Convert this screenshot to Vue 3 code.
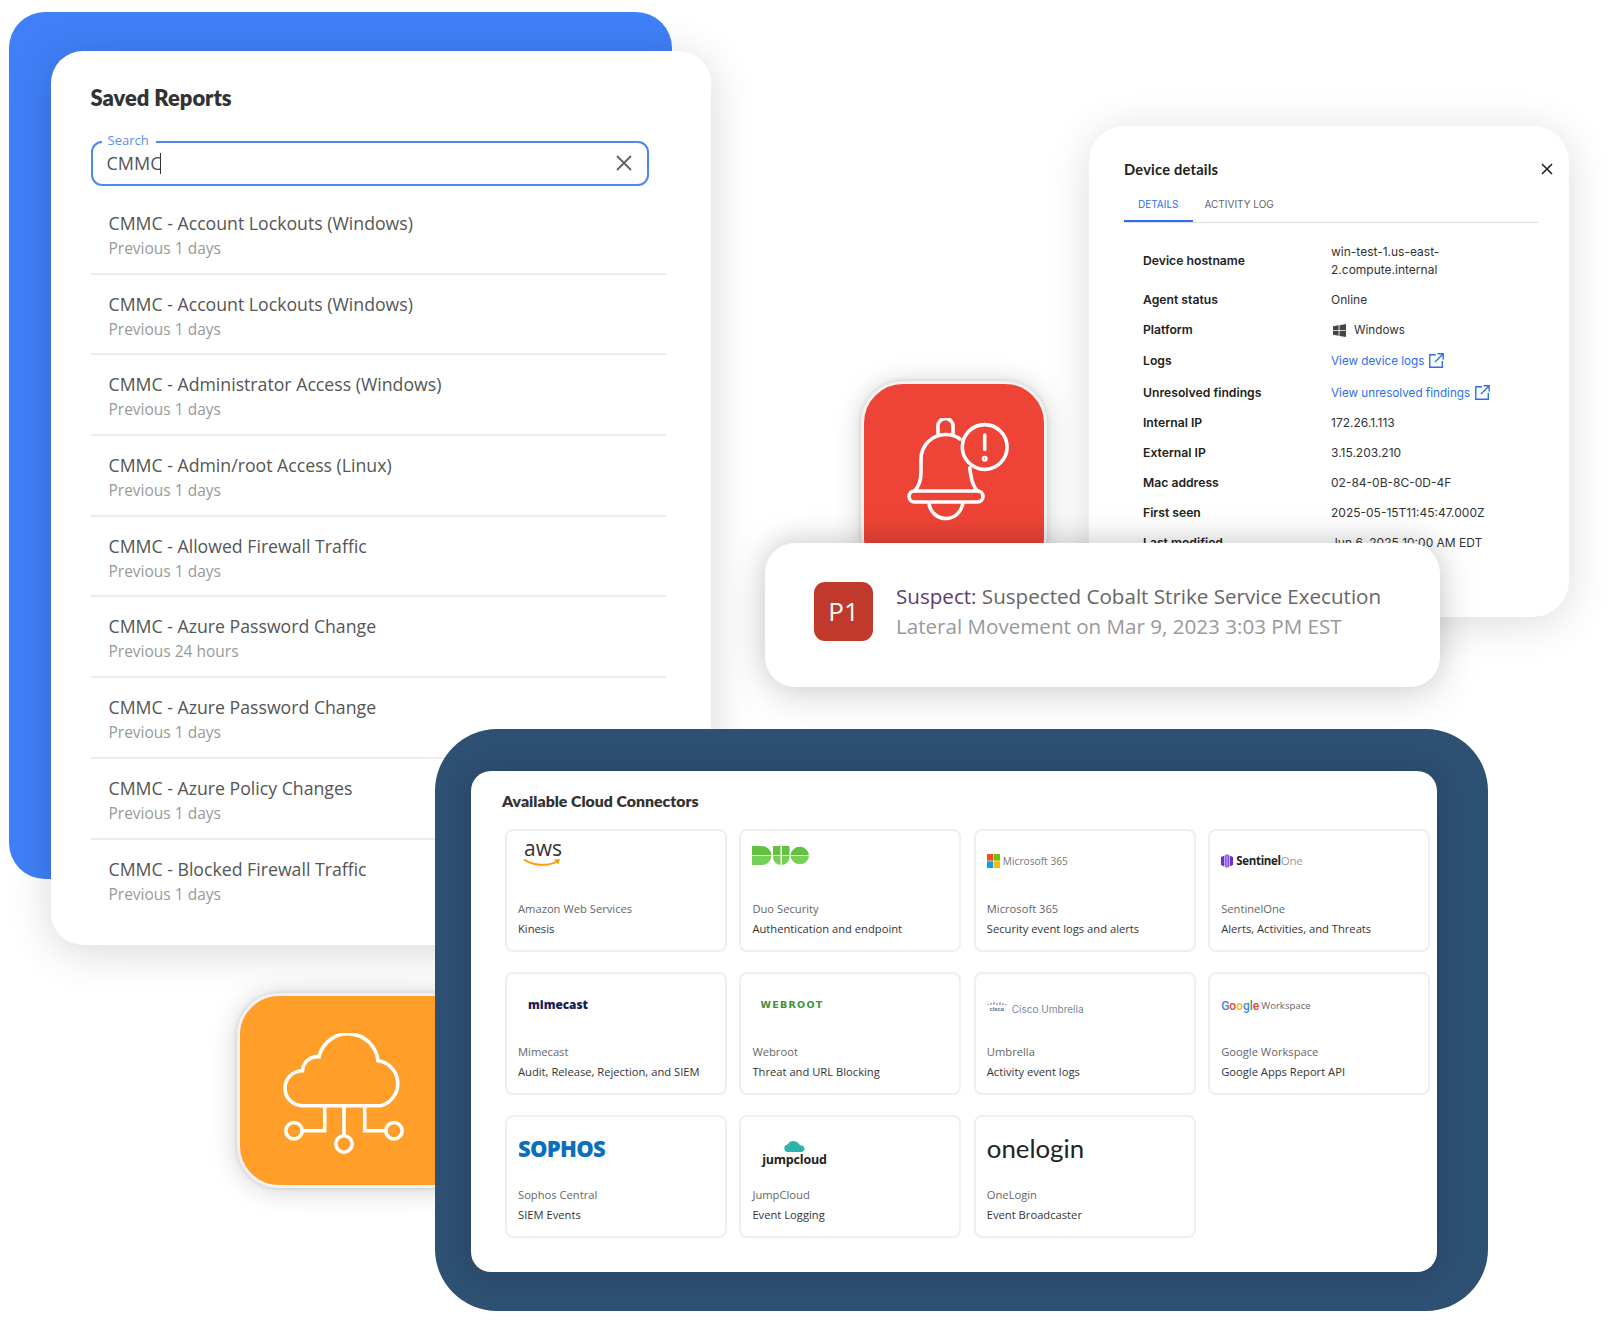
<template>
  <div class="canvas">
    <div class="blue-panel"></div>

    <section class="saved">
      <h2 class="saved-title">Saved Reports</h2>
      <div class="search">
        <span class="search-label">Search</span>
        <span class="search-value">CMMC<i class="caret"></i></span>
        <svg class="search-clear" viewBox="0 0 16 16" width="16" height="16">
          <path d="M1 1l14 14M15 1L1 15" fill="none" stroke="#5f6368" stroke-width="1.8" />
        </svg>
      </div>
      <div class="report" v-for="(r, i) in reports" :key="i">
        <div class="report-name">{{ r.name }}</div>
        <div class="report-range">{{ r.range }}</div>
      </div>
    </section>

    <div class="tile tile-orange">
      <svg viewBox="0 0 122 122" width="122" height="122" fill="none" stroke="#fff" stroke-width="3.6">
        <path d="M19.5 72.7A17.5 17.5 0 0 1 19.5 37.7A15 15 0 0 1 36 23.7A30 30 0 0 1 95 27.7A23 23 0 0 1 97.7 72.7Z" />
        <path d="M41.7 72.7V97.7H19.5M61 72.7V103M81.7 72.7V97.7H103" />
        <circle cx="11" cy="97.7" r="8.2" />
        <circle cx="61" cy="111" r="8.2" />
        <circle cx="111" cy="97.7" r="8.2" />
      </svg>
    </div>

    <section class="device">
      <div class="device-head">
        <h3 class="device-title">Device details</h3>
        <svg viewBox="0 0 12 12" width="12" height="12">
          <path d="M1 1l10 10M11 1L1 11" fill="none" stroke="#222" stroke-width="1.6" />
        </svg>
      </div>
      <div class="tabs">
        <span class="tab active">DETAILS</span>
        <span class="tab">ACTIVITY LOG</span>
      </div>
      <div class="rows">
        <div class="row row-tall">
          <span class="row-label">Device hostname</span>
          <span class="row-value">win-test-1.us-east-<br />2.compute.internal</span>
        </div>
        <div class="row">
          <span class="row-label">Agent status</span>
          <span class="row-value">Online</span>
        </div>
        <div class="row">
          <span class="row-label">Platform</span>
          <span class="row-value platform">
            <svg viewBox="0 0 12 12" width="13" height="13">
              <path d="M0 2l5.2-.8v4.5H0zM6 1.1L12 0v5.7H6zM0 6.4h5.2v4.4L0 10zM6 6.4h6V12l-6-.9z" fill="#444" />
            </svg>
            Windows
          </span>
        </div>
        <div class="row row-link" v-for="l in links" :key="l.label">
          <span class="row-label">{{ l.label }}</span>
          <span class="row-value link">
            {{ l.text }}
            <svg viewBox="0 0 15 15" width="15" height="15" fill="none" stroke="#2b6ff0" stroke-width="1.4">
              <path d="M7 1.7H.8v12.5h12.5V8M8.5.8h5.7v5.7M14 1L6 9" />
            </svg>
          </span>
        </div>
        <div class="row" v-for="d in deviceRows" :key="d.label">
          <span class="row-label">{{ d.label }}</span>
          <span class="row-value">{{ d.value }}</span>
        </div>
      </div>
    </section>

    <div class="tile tile-red">
      <svg viewBox="0 0 104 104" width="104" height="104" fill="none" stroke="#fff" stroke-width="3.6" stroke-linecap="round">
        <path d="M31 17.5V8A7.5 7.5 0 0 1 46 8V17.5" />
        <path d="M8 72.5C12 68 14 62 14 54V41A24.5 24.5 0 0 1 38.5 16.5C44 16.5 49 18 53 21" />
        <path d="M62.7 50L64 58C65 64 67 69 70 72.5" />
        <rect x="2" y="73" width="74" height="11" rx="5.5" />
        <path d="M22 85C23 95 31 100.5 39 100.5C47 100.5 54 95 56 85" />
        <circle cx="77.7" cy="29" r="22.4" />
        <path d="M77.7 17V31.5" />
        <circle cx="77.7" cy="40.7" r="1.2" />
      </svg>
    </div>

    <section class="alert">
      <div class="priority">P1</div>
      <div class="alert-text">
        <div class="alert-line"><span class="suspect">Suspect:</span> Suspected Cobalt Strike Service Execution</div>
        <div class="alert-sub">Lateral Movement on Mar 9, 2023 3:03 PM EST</div>
      </div>
    </section>

    <section class="navy">
      <div class="connectors">
        <h3 class="connectors-title">Available Cloud Connectors</h3>
        <div class="connector-grid">
          <div class="connector" v-for="c in connectors" :key="c.id">
            <div class="logo" :class="'logo-' + c.id">
              <template v-if="c.id === 'aws'">
                <span class="aws-text">aws</span>
                <svg class="aws-smile" viewBox="0 0 38 9" width="38" height="9">
                  <path d="M1 1.5C10 8 25 8.5 34 3.5" fill="none" stroke="#f90" stroke-width="2" />
                  <path d="M31 1.5L37 1L35 6.5Z" fill="#f90" />
                </svg>
              </template>

              <svg v-else-if="c.id === 'duo'" viewBox="0 0 57 19" width="57" height="19">
                <path d="M0 0H10A9.5 9.5 0 0 1 19.5 9.2H0Z" fill="#63c13f" />
                <path d="M0 10H19.5A9.5 9.5 0 0 1 10 19H0Z" fill="#78cf57" />
                <path d="M21 0H28.5V9.2H21ZM30 0H37.5V9.2H30Z" fill="#63c13f" />
                <path d="M21 10H28.5V19A8 8 0 0 1 21 11ZM30 10H37.5V11A8 8 0 0 1 30 19Z" fill="#78cf57" />
                <path d="M38.5 9.2A9.3 9.3 0 0 1 57 9.2Z" fill="#63c13f" />
                <path d="M38.5 10H57A9.3 9.3 0 0 1 38.5 10Z" fill="#78cf57" />
              </svg>

              <template v-else-if="c.id === 'ms'">
                <svg viewBox="0 0 13 14" width="13" height="14">
                  <rect width="6.2" height="6.7" fill="#f25022" />
                  <rect x="6.8" width="6.2" height="6.7" fill="#7fba00" />
                  <rect y="7.3" width="6.2" height="6.7" fill="#00a4ef" />
                  <rect x="6.8" y="7.3" width="6.2" height="6.7" fill="#ffb900" />
                </svg>
                <span>Microsoft 365</span>
              </template>

              <template v-else-if="c.id === 's1'">
                <svg viewBox="0 0 12 14" width="12" height="14" fill="#6b2fd6">
                  <path d="M0 3L3.4 1.5V12.5L0 11ZM4.2 1.2L5.6 0V14L4.2 12.8ZM6.4 0L7.8 1.2V12.8L6.4 14ZM8.6 1.5L12 3V11L8.6 12.5Z" />
                </svg>
                <span class="s1-text"><b>Sentinel</b>One</span>
              </template>

              <span v-else-if="c.id === 'mimecast'">mimecast</span>
              <span v-else-if="c.id === 'webroot'">WEBROOT</span>

              <template v-else-if="c.id === 'cisco'">
                <span class="cisco-mark">
                  <svg viewBox="0 0 20 4" width="20" height="4" stroke="#5b6f8c" stroke-width="1">
                    <path d="M1 3V2M4 3V1M7 3V0M10 3V1M13 3V0M16 3V1M19 3V2" />
                  </svg>
                  <span class="cisco-word">cisco</span>
                </span>
                <span>Cisco Umbrella</span>
              </template>

              <template v-else-if="c.id === 'google'">
                <span class="google-word"><i class="g-b">G</i><i class="g-r">o</i><i class="g-y">o</i><i class="g-b">g</i><i class="g-g">l</i><i class="g-r">e</i></span>
                <span>Workspace</span>
              </template>

              <span v-else-if="c.id === 'sophos'">SOPHOS</span>

              <template v-else-if="c.id === 'jumpcloud'">
                <svg viewBox="0 0 23 11" width="23" height="11">
                  <path d="M4 11A3.8 3.8 0 0 1 4.5 3.6A7 7 0 0 1 17 4.4A3.4 3.4 0 0 1 19 11Z" fill="#2eb2ab" />
                </svg>
                <span>jumpcloud</span>
              </template>

              <span v-else-if="c.id === 'onelogin'">onelogin</span>
            </div>
            <div class="connector-name">{{ c.name }}</div>
            <div class="connector-desc">{{ c.desc }}</div>
          </div>
        </div>
      </div>
    </section>
  </div>
</template>

<script setup>
const reports = [
  { name: 'CMMC - Account Lockouts (Windows)', range: 'Previous 1 days' },
  { name: 'CMMC - Account Lockouts (Windows)', range: 'Previous 1 days' },
  { name: 'CMMC - Administrator Access (Windows)', range: 'Previous 1 days' },
  { name: 'CMMC - Admin/root Access (Linux)', range: 'Previous 1 days' },
  { name: 'CMMC - Allowed Firewall Traffic', range: 'Previous 1 days' },
  { name: 'CMMC - Azure Password Change', range: 'Previous 24 hours' },
  { name: 'CMMC - Azure Password Change', range: 'Previous 1 days' },
  { name: 'CMMC - Azure Policy Changes', range: 'Previous 1 days' },
  { name: 'CMMC - Blocked Firewall Traffic', range: 'Previous 1 days' },
]

const links = [
  { label: 'Logs', text: 'View device logs' },
  { label: 'Unresolved findings', text: 'View unresolved findings' },
]

const deviceRows = [
  { label: 'Internal IP', value: '172.26.1.113' },
  { label: 'External IP', value: '3.15.203.210' },
  { label: 'Mac address', value: '02-84-0B-8C-0D-4F' },
  { label: 'First seen', value: '2025-05-15T11:45:47.000Z' },
  { label: 'Last modified', value: 'Jun 6, 2025 10:00 AM EDT' },
]

const connectors = [
  { id: 'aws', name: 'Amazon Web Services', desc: 'Kinesis' },
  { id: 'duo', name: 'Duo Security', desc: 'Authentication and endpoint' },
  { id: 'ms', name: 'Microsoft 365', desc: 'Security event logs and alerts' },
  { id: 's1', name: 'SentinelOne', desc: 'Alerts, Activities, and Threats' },
  { id: 'mimecast', name: 'Mimecast', desc: 'Audit, Release, Rejection, and SIEM' },
  { id: 'webroot', name: 'Webroot', desc: 'Threat and URL Blocking' },
  { id: 'cisco', name: 'Umbrella', desc: 'Activity event logs' },
  { id: 'google', name: 'Google Workspace', desc: 'Google Apps Report API' },
  { id: 'sophos', name: 'Sophos Central', desc: 'SIEM Events' },
  { id: 'jumpcloud', name: 'JumpCloud', desc: 'Event Logging' },
  { id: 'onelogin', name: 'OneLogin', desc: 'Event Broadcaster' },
]
</script>

<style scoped>
.canvas {
  position: relative;
  width: 1620px;
  height: 1323px;
  overflow: hidden;
  background: #fff;
  font-family: "Open Sans", sans-serif;
}

/* the windows sit on a free canvas, overlapping each other */
.blue-panel {
  position: absolute;
  left: 9px;
  top: 12px;
  width: 663px;
  height: 867px;
  border-radius: 36px;
  background: #3f7ff8;
}

.saved {
  position: absolute;
  left: 51px;
  top: 51px;
  box-sizing: border-box;
  width: 660px;
  height: 894px;
  padding: 35px 45px 0 39.5px;
  border-radius: 32px;
  background: #fff;
  box-shadow: 0 6px 44px rgba(0, 0, 0, 0.16);
}

.saved-title {
  margin: 0;
  font: 800 21.9px/24px Lato, sans-serif;
  color: #333;
}

.search {
  position: relative;
  box-sizing: border-box;
  display: flex;
  align-items: center;
  justify-content: space-between;
  width: 558px;
  height: 45px;
  margin: 31px 0 8px;
  padding: 0 15px 2px 14px;
  border: 2px solid #4a88f5;
  border-radius: 11px;
}

.search-label {
  position: absolute;
  left: 9px;
  top: -12px;
  padding: 0 7px 0 6px;
  background: #fff;
  font-size: 13px;
  line-height: 18px;
  color: #5a90f3;
}

.search-value {
  font-size: 18px;
  color: #555;
}

.caret {
  display: inline-block;
  width: 1.5px;
  height: 21px;
  margin-left: -2px;
  vertical-align: -4px;
  background: #333;
}

.report {
  box-sizing: border-box;
  width: 575px;
  height: 80.7px;
  padding: 16px 0 0 18px;
  border-bottom: 2px solid #ececec;
}

.report:last-child {
  border-bottom: 0;
}

.report-name {
  font-size: 17.7px;
  line-height: 26px;
  color: #555;
}

.report-range {
  font-size: 15.5px;
  line-height: 24px;
  color: #999;
}

.tile {
  position: absolute;
  box-sizing: border-box;
  border: 3px solid #f2f2f4;
  border-radius: 42px;
  box-shadow: 0 0 5px rgba(0, 0, 0, 0.14), 0 2px 28px rgba(0, 0, 0, 0.18);
}

.tile-orange {
  left: 237px;
  top: 993px;
  width: 240px;
  height: 195px;
  padding: 37px 0 0 43px;
  background: #ff9f2a;
}

.tile-red {
  left: 861px;
  top: 381px;
  width: 186px;
  height: 200px;
  padding: 34px 0 0 43px;
  background: #ee4437;
}

.device {
  position: absolute;
  left: 1089px;
  top: 126px;
  box-sizing: border-box;
  width: 480px;
  height: 491px;
  padding: 33px 31px 0 35px;
  overflow: hidden;
  border-radius: 36px;
  background: #fff;
  box-shadow: 0 6px 44px rgba(0, 0, 0, 0.14);
  font-family: Inter, sans-serif;
}

.device-head {
  display: flex;
  align-items: center;
  justify-content: space-between;
  height: 20px;
  margin-right: -15px;
}

.device-title {
  margin: 0;
  font: 700 14.7px/20px Lato, sans-serif;
  letter-spacing: 0.2px;
  color: #222;
}

.tabs {
  display: flex;
  height: 32px;
  margin-top: 11px;
  border-bottom: 1px solid #ddd;
}

.tab {
  box-sizing: border-box;
  height: 32px;
  padding: 6px 12px 0;
  font-size: 10px;
  line-height: 17px;
  color: #666;
}

.tab.active {
  padding: 6px 14px 0;
  border-bottom: 2px solid #2b6ff0;
  color: #2b6ff0;
}

.rows {
  padding: 14px 0 0 19px;
}

.row {
  display: grid;
  grid-template-columns: 188px 1fr;
  align-items: center;
  height: 30px;
  font-size: 12px;
  line-height: 18px;
  color: #333;
}

.row-tall {
  height: 48px;
}

.row-tall .row-value {
  margin-top: -1px;
}

.row-link {
  height: 31px;
  font-size: 11.7px;
}

.row-link + .row-link {
  margin-top: 1px;
}

.row-label {
  font-size: 12.2px;
  font-weight: 600;
  color: #222;
}

.platform {
  display: flex;
  align-items: center;
  gap: 8px;
  padding-left: 2px;
  font-size: 11.7px;
}

.link {
  display: flex;
  align-items: center;
  gap: 5px;
  color: #2b6ff0;
}

.alert {
  position: absolute;
  left: 765px;
  top: 543px;
  box-sizing: border-box;
  display: flex;
  align-items: flex-start;
  gap: 23px;
  width: 675px;
  height: 144px;
  padding: 39px 0 0 49px;
  border-radius: 30px;
  background: #fff;
  box-shadow: 0 6px 42px rgba(0, 0, 0, 0.18), 0 -6px 24px rgba(0, 0, 0, 0.08);
}

.priority {
  flex: none;
  width: 59px;
  height: 59px;
  border-radius: 11px;
  background: #c0392b;
  font-size: 26px;
  line-height: 59px;
  text-align: center;
  color: #fff;
}

.alert-text {
  margin-top: -1px;
  font-size: 20.6px;
  line-height: 30px;
  color: #666;
}

.suspect {
  color: #5f3a6e;
}

.alert-sub {
  color: #999;
}

.navy {
  position: absolute;
  left: 435px;
  top: 729px;
  box-sizing: border-box;
  width: 1053px;
  height: 582px;
  padding: 42px 51px 39px 36px;
  border-radius: 62px;
  background: #2e5073;
}

.connectors {
  box-sizing: border-box;
  height: 501px;
  padding: 20px 0 0 34px;
  border-radius: 20px;
  background: #fff;
  box-shadow: 0 0 34px rgba(0, 0, 0, 0.16);
}

.connectors-title {
  margin: 0 0 18px -3px;
  font: 800 15.85px/20px Lato, sans-serif;
  color: #333;
}

.connector-grid {
  display: grid;
  grid-template-columns: repeat(4, 222px);
  grid-auto-rows: 123px;
  gap: 20px 12.4px;
}

.connector {
  box-sizing: border-box;
  display: flex;
  flex-direction: column;
  padding: 0 0 11px 11px;
  border: 2px solid #efefef;
  border-radius: 8px;
}

.logo {
  flex: 1;
  display: flex;
  align-items: center;
  min-height: 0;
  margin-top: 1px;
}

.connector-name {
  font-size: 11.2px;
  line-height: 20px;
  color: #666;
}

.connector-desc {
  font-size: 11.2px;
  font-weight: 500;
  line-height: 20px;
  color: #333;
}

.logo-aws {
  flex-direction: column;
  align-items: flex-start;
  padding: 6px 0 0 5px;
}

.aws-text {
  margin-left: 1px;
  font: 400 21px/20px "Open Sans", sans-serif;
  color: #333;
}

.logo-duo {
  align-items: flex-start;
  padding-top: 14px;
}

.logo-ms {
  align-items: flex-start;
  gap: 3px;
  padding-top: 22px;
  font-size: 10.2px;
  line-height: 14px;
  color: #777;
}

.logo-s1 {
  align-items: flex-start;
  gap: 3px;
  padding-top: 22px;
  line-height: 14px;
}

.s1-text {
  font-size: 11.5px;
  letter-spacing: -0.3px;
  color: #999;
}

.s1-text b {
  color: #222;
}

.logo-mimecast {
  align-items: flex-start;
  padding: 21px 0 0 10px;
  font: 800 11.8px/16px "Open Sans", sans-serif;
  color: #1b1b5e;
}

.logo-webroot {
  align-items: flex-start;
  padding: 22px 0 0 8px;
  font: 700 9.5px/16px "DejaVu Sans", sans-serif;
  letter-spacing: 1.3px;
  color: #3c8f3c;
}

.logo-cisco {
  align-items: flex-start;
  gap: 5px;
  padding-top: 27px;
  font: 400 10px/14px Inter, sans-serif;
  color: #7a879b;
}

.cisco-mark {
  display: flex;
  flex-direction: column;
  align-items: center;
}

.cisco-word {
  font: 700 6px/7px "Open Sans", sans-serif;
  color: #5b6f8c;
}

.logo-google {
  align-items: flex-start;
  gap: 2px;
  padding-top: 23px;
  font: 400 9.6px/16px "Open Sans", sans-serif;
  color: #666;
}

.google-word {
  font: 500 12px/16px Roboto, sans-serif;
}

.google-word i {
  font-style: normal;
}

.g-b { color: #4285f4; }
.g-r { color: #ea4335; }
.g-y { color: #fbbc05; }
.g-g { color: #34a853; }

.logo-sophos {
  align-items: flex-start;
  padding-top: 15px;
  font: 800 22px/30px "Open Sans", sans-serif;
  letter-spacing: -0.7px;
  color: #0b6fc0;
}

.logo-jumpcloud {
  flex-direction: column;
  align-items: center;
  gap: 1px;
  width: 64px;
  margin-left: 10px;
  padding-top: 23px;
  font: 700 12.5px/14px "Open Sans", sans-serif;
  letter-spacing: -0.2px;
  color: #222;
}

.logo-onelogin {
  align-items: flex-start;
  padding-top: 13px;
  font: 400 25.8px/34px Lato, sans-serif;
  color: #222;
}
</style>

<style>
html, body {
  margin: 0;
  background: #fff;
}
</style>
